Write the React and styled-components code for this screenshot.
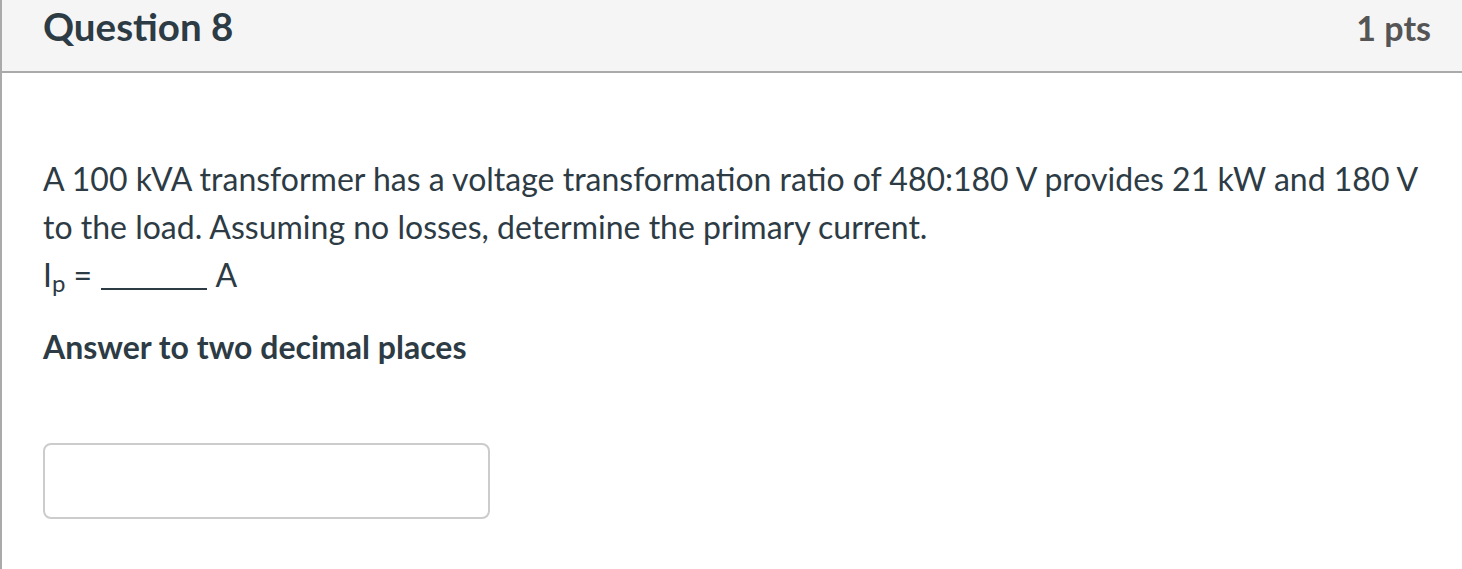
import React from "react";
import styled, { createGlobalStyle } from "styled-components";

const GlobalStyle = createGlobalStyle`
	body {
		margin: 0;
		background: #ffffff;
		font-family: Lato, "Open Sans", sans-serif;
		color: #2d3b45;
	}
`;

function App() {
	return (
		<>
			<GlobalStyle />
			<Card>
				<Header>
					<Title>Question 8</Title>
					<Points>1 pts</Points>
				</Header>
				<Body>
					<Text>
						A 100 kVA transformer has a voltage transformation ratio of 480:180 V
						provides 21 kW and 180 V to the load. Assuming no losses, determine the
						primary current.
						<br />
						I<sub>p</sub> = <Blank /> A
					</Text>
					<Note>Answer to two decimal places</Note>
					<Answer type="text" />
				</Body>
			</Card>
		</>
	);
}

const Card = styled.div`
	border-left: 2px solid #aaaaaa;
	min-height: 569px;
	box-sizing: border-box;
`;

const Header = styled.div`
	display: flex;
	justify-content: space-between;
	align-items: baseline;
	height: 73px;
	box-sizing: border-box;
	padding: 3px 31px 0 41px;
	background: #f5f5f5;
	border-bottom: 2px solid #aaaaaa;
`;

const Title = styled.h2`
	margin: 0;
	font-size: 38.5px;
	line-height: 46px;
	font-weight: 700;
	color: #2d3b45;
`;

const Points = styled.div`
	font-size: 34px;
	line-height: 46px;
	font-weight: 700;
	color: #555555;
`;

const Body = styled.div`
	padding: 82px 41px 0;
`;

const Text = styled.p`
	margin: 0;
	font-size: 32px;
	line-height: 48px;
	sub {
		font-size: 24px;
		vertical-align: -5px;
		line-height: 0;
	}
`;

const Blank = styled.span`
	display: inline-block;
	width: 106px;
	height: 2px;
	background: #2d3b45;
	vertical-align: -3px;
	margin: 0 1px;
`;

const Note = styled.p`
	margin: 24px 0 0;
	font-size: 32px;
	font-weight: 700;
	line-height: 48px;
`;

const Answer = styled.input`
	display: block;
	margin-top: 72px;
	width: 447px;
	height: 76px;
	box-sizing: border-box;
	border: 2px solid #cccccc;
	border-radius: 8px;
	background: #ffffff;
	outline: none;
`;

export default App;
